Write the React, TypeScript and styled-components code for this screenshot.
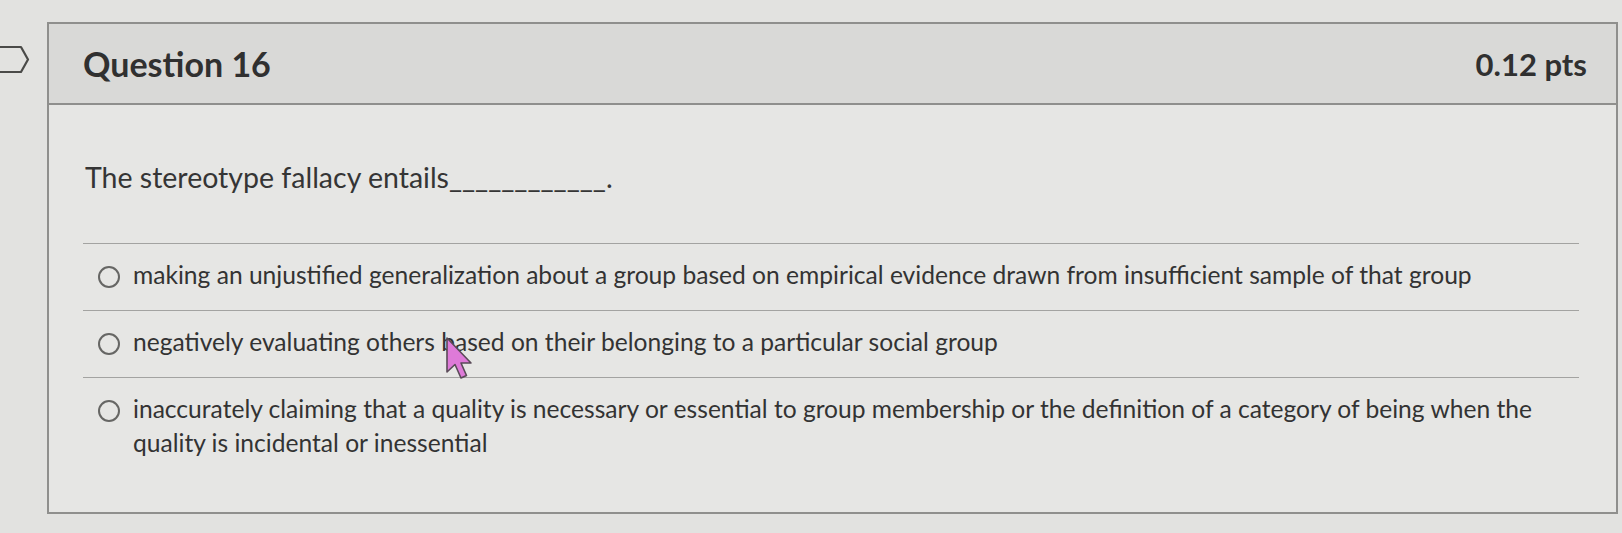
import React from "react";
import styled, { createGlobalStyle } from "styled-components";

const Global = createGlobalStyle`
  html, body { margin: 0; padding: 0; background: #e2e2e0; }
  body { font-family: Lato, "Open Sans", "Liberation Sans", sans-serif; color: #3a3a3a; }
`;

const Page = styled.div`
  position: relative;
  display: flex;
  align-items: flex-start;
  width: 1622px;
  height: 533px;
  padding-top: 22px;
  box-sizing: border-box;
  overflow: hidden;
  background: #e2e2e0;
`;

const FlagCol = styled.div`
  flex: none;
  width: 47px;
  padding-top: 23px;
`;

const Card = styled.section`
  flex: none;
  width: 1571px;
  border: 2px solid #8f8f8d;
  box-sizing: border-box;
  background: #e6e6e4;
`;

const Header = styled.header`
  display: flex;
  justify-content: space-between;
  align-items: center;
  height: 79px;
  padding: 0 29px 0 34px;
  background: #d9d9d7;
  border-bottom: 2px solid #8f8f8d;
`;

const Title = styled.h2`
  margin: 0;
  font-size: 34px;
  line-height: 30px;
  font-weight: 700;
  color: #303030;
`;

const Points = styled.span`
  font-size: 31px;
  line-height: 30px;
  font-weight: 700;
  color: #303030;
`;

const Body = styled.div`
  padding: 55px 37px 34px 34px;
`;

const Prompt = styled.p`
  margin: 0 0 48px 2px;
  font-size: 28.5px;
  line-height: 35px;
  color: #353535;
`;

const Options = styled.div`
  display: flex;
  flex-direction: column;
`;

const Option = styled.label`
  display: flex;
  align-items: flex-start;
  gap: 13px;
  padding: 14px 40px 18px 15px;
  border-top: 1px solid #a3a3a1;
  font-size: 24.6px;
  line-height: 34px;
  color: #333333;
`;

const Radio = styled.span`
  flex: none;
  width: 22px;
  height: 22px;
  margin-top: 8px;
  border: 2px solid #666664;
  border-radius: 50%;
  box-sizing: border-box;
`;

const Cursor = styled.svg`
  position: absolute;
  left: 444px;
  top: 336px;
`;

const options = [
  "making an unjustified generalization about a group based on empirical evidence drawn from insufficient sample of that group",
  "negatively evaluating others based on their belonging to a particular social group",
  "inaccurately claiming that a quality is necessary or essential to group membership or the definition of a category of being when the quality is incidental or inessential",
];

export default function App() {
  return (
    <Page>
      <Global />
      <FlagCol>
        <svg width="30" height="30" viewBox="0 0 30 30">
          <path d="M-2 2 H21 L28 14.5 L21 27 H-2" fill="none" stroke="#4a4a48" strokeWidth="2.2" strokeLinejoin="round" />
        </svg>
      </FlagCol>
      <Card>
        <Header>
          <Title>Question 16</Title>
          <Points>0.12 pts</Points>
        </Header>
        <Body>
          <Prompt>The stereotype fallacy entails____________.</Prompt>
          <Options>
            {options.map((o) => (
              <Option key={o}>
                <Radio />
                <span>{o}</span>
              </Option>
            ))}
          </Options>
        </Body>
      </Card>
      <Cursor width="30" height="48" viewBox="0 0 30 48">
        <path d="M3 2 L3 36 L11 28.5 L17 42 L22.5 39.5 L17 27 L27 27 Z" fill="#de7ad8" stroke="#5a4a58" strokeWidth="1.6" strokeLinejoin="round" />
      </Cursor>
    </Page>
  );
}
